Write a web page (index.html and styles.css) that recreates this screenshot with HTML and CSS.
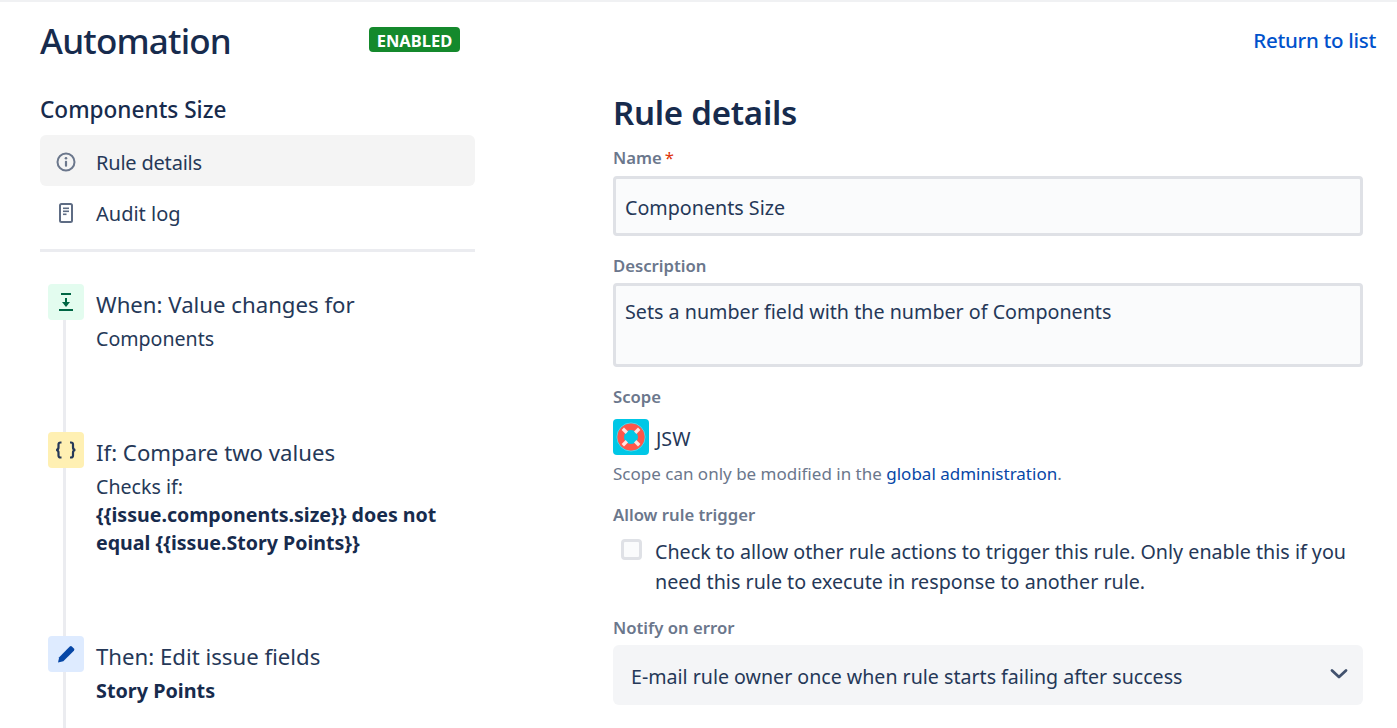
FILE: index.html
```html
<!DOCTYPE html>
<html lang="en">
<head>
<meta charset="utf-8">
<title>Automation</title>
<link rel="stylesheet" href="styles.css">
</head>
<body>
<div class="page">
  <header class="page-head">
    <div class="head-left">
      <h1 class="page-title">Automation</h1>
      <span class="lozenge"><span class="lozenge-text">ENABLED</span></span>
    </div>
    <a class="return-link" href="#">Return to list</a>
  </header>
  <div class="columns">
    <aside class="sidebar">
      <h2 class="rule-name">Components Size</h2>
      <nav class="nav">
        <a class="nav-item active" href="#">
          <span class="nav-icon">
            <svg width="24" height="24" viewBox="0 0 24 24"><circle cx="12" cy="12" r="8.500" fill="none" stroke="#6b778c" stroke-width="2"/><circle cx="12" cy="8.300" r="1.300" fill="#6b778c"/><rect x="10.900" y="10.800" width="2.200" height="6" rx="1" fill="#6b778c"/></svg>
          </span>
          <span class="nav-label">Rule details</span>
        </a>
        <a class="nav-item" href="#">
          <span class="nav-icon">
            <svg width="24" height="24" viewBox="0 0 24 24"><rect x="6" y="3" width="12" height="18" rx="1.500" fill="none" stroke="#5e6c84" stroke-width="2"/><rect x="9" y="6.500" width="6" height="1.600" fill="#5e6c84"/><rect x="9" y="9.500" width="6" height="1.600" fill="#5e6c84"/><rect x="9" y="12.500" width="3.500" height="1.600" fill="#5e6c84"/></svg>
          </span>
          <span class="nav-label audit">Audit log</span>
        </a>
      </nav>
      <div class="divider"></div>
      <ol class="steps">
        <li class="step step-when">
          <div class="step-rail">
            <span class="step-icon icon-green">
              <svg width="24" height="24" viewBox="0 0 24 24"><rect x="7" y="3" width="10" height="2" fill="#006644"/><rect x="5" y="19" width="14" height="2" fill="#006644"/><rect x="11" y="8" width="2" height="5" fill="#006644"/><path d="M8 12h8l-4 5z" fill="#006644"/></svg>
            </span>
            <span class="step-line"></span>
          </div>
          <div class="step-body">
            <div class="step-title">When: Value changes for</div>
            <div class="step-text">Components</div>
          </div>
        </li>
        <li class="step step-if">
          <div class="step-rail">
            <span class="step-icon icon-yellow">
              <svg width="36" height="36" viewBox="0 0 36 36"><path d="M13.500 10.500h-1a2 2 0 0 0-2 2v2.800a2.600 2.600 0 0 1-2.300 2.700 2.600 2.600 0 0 1 2.300 2.700v2.800a2 2 0 0 0 2 2h1M22 10.500h1a2 2 0 0 1 2 2v2.800a2.600 2.600 0 0 0 2.300 2.700 2.600 2.600 0 0 0-2.300 2.700v2.800a2 2 0 0 1-2 2h-1" fill="none" stroke="#253858" stroke-width="2.200"/></svg>
            </span>
            <span class="step-line"></span>
          </div>
          <div class="step-body">
            <div class="step-title">If: Compare two values</div>
            <div class="step-text">Checks if:</div>
            <div class="step-text strong">{{issue.components.size}} does not<br>equal {{issue.Story Points}}</div>
          </div>
        </li>
        <li class="step step-then">
          <div class="step-rail">
            <span class="step-icon icon-blue">
              <svg width="24" height="24" viewBox="0 0 24 24"><path d="M4 20.500l1.200-5.300L15.800 4.600a1.500 1.500 0 0 1 2.100 0l2 2a1.500 1.500 0 0 1 0 2.100L9.300 19.300z" fill="#0747a6"/></svg>
            </span>
            <span class="step-line"></span>
          </div>
          <div class="step-body">
            <div class="step-title">Then: Edit issue fields</div>
            <div class="step-text strong">Story Points</div>
          </div>
        </li>
      </ol>
    </aside>
    <main class="details">
      <h2 class="details-title">Rule details</h2>
      <div class="label label-name">Name<span class="req">*</span></div>
      <div class="field field-name">Components Size</div>
      <div class="label label-desc">Description</div>
      <div class="field field-desc">Sets a number field with the number of Components</div>
      <div class="label label-scope">Scope</div>
      <div class="scope-row">
        <svg class="scope-icon" width="36" height="36" viewBox="0 0 36 36">
          <rect width="36" height="36" rx="4" fill="#00c7e6"/>
          <circle cx="18" cy="18" r="14" fill="none" stroke="#fff" stroke-width=".6" opacity=".6"/>
          <circle cx="18" cy="18" r="10.300" fill="none" stroke="#ff5649" stroke-width="6.600"/>
          <g stroke="#ffe4e0" stroke-width="3.400">
            <path d="M9.800 9.800l4 4"/><path d="M26.200 9.800l-4 4"/><path d="M9.800 26.200l4-4"/><path d="M26.200 26.200l-4-4"/>
          </g>
        </svg>
        <span class="scope-name">JSW</span>
      </div>
      <div class="help">Scope can only be modified in the <a href="#">global administration</a>.</div>
      <div class="label label-allow">Allow rule trigger</div>
      <label class="check-row">
        <span class="checkbox"></span>
        <span class="check-text">Check to allow other rule actions to trigger this rule. Only enable this if you need this rule to execute in response to another rule.</span>
      </label>
      <div class="label label-notify">Notify on error</div>
      <div class="select">
        <span class="select-value">E-mail rule owner once when rule starts failing after success</span>
        <svg class="select-chevron" width="24" height="24" viewBox="0 0 24 24"><path d="M5 8.500l7 6.500 7-6.500" fill="none" stroke="#42526e" stroke-width="2.800" stroke-linecap="round" stroke-linejoin="round"/></svg>
      </div>
    </main>
  </div>
</div>
</body>
</html>
```

FILE: styles.css
```css
* { box-sizing: border-box; }
html, body { margin: 0; padding: 0; height: 100%; overflow: hidden; background: #fff; }
body {
  font-family: "Noto Sans", "Open Sans", "Liberation Sans", sans-serif;
  color: #172b4d;
  font-size: 20px;
}
a { text-decoration: none; }
h1, h2, ol { margin: 0; padding: 0; }
.page { height: 728px; overflow: hidden; border-top: 2px solid #f0f1f3; padding: 0 21px 0 40px; }
.page-head { display: flex; justify-content: space-between; align-items: center; height: 78px; }
.head-left { display: flex; width: 420px; justify-content: space-between; align-items: center; height: 78px; padding-bottom: 1px; }
.page-title { font-size: 35px; font-weight: 500; line-height: 48px; letter-spacing: -0.8px; margin-top: 1px; margin-bottom: 1px; }
.lozenge { display: flex; align-items: center; justify-content: center; background: #14892c; color: #fff; font-size: 16.5px; font-weight: 700; border-radius: 4px; height: 25px; width: 91px; margin-bottom: 2px; }
.lozenge-text { padding-top: 1px; }
.return-link { color: #0052cc; font-size: 20.5px; font-weight: 500; margin-bottom: 2px; letter-spacing: -0.3px; }
.columns { display: grid; grid-template-columns: 435px 750px; column-gap: 138px; margin-top: -1px; }
.rule-name { font-size: 22.6px; font-weight: 500; line-height: 30px; margin-top: 16px; margin-bottom: 10px; }
.nav { display: flex; flex-direction: column; }
.nav-item { display: flex; align-items: center; height: 51px; padding-top: 2px; border-radius: 6px; color: #253858; font-size: 20px; letter-spacing: -0.2px; }
.nav-item.active { background: #f4f4f4; }
.nav-icon { width: 56px; padding-left: 14px; display: flex; align-items: center; }
.nav-label { padding-top: 2px; }
.nav-label.audit { letter-spacing: 0; }
.divider { height: 3px; background: #ebecf0; margin-top: 12px; }
.steps { list-style: none; margin-top: 32px; }
.step { display: flex; padding-left: 8px; }
.step-when { height: 148px; }
.step-if { height: 204px; }
.step-then { height: 92px; }
.step-rail { width: 48px; display: flex; flex-direction: column; }
.step-icon { width: 36px; height: 36px; border-radius: 4px; display: flex; align-items: center; justify-content: center; flex: none; }
.icon-green { background: #e3fcef; }
.icon-yellow { background: #fff0b3; }
.icon-blue { background: #deebff; }
.step-line { width: 3px; flex: 1; background: #ebecf0; margin-left: 15px; }
.step-body { padding-top: 4px; }
.step-title { font-size: 22.2px; line-height: 34px; color: #253858; }
.step-text { font-size: 19.6px; line-height: 28px; color: #253858; margin-top: 3px; }
.step-text.strong { font-weight: 700; color: #172b4d; margin-top: 0; }
.step-then .step-text.strong { margin-top: 3px; font-size: 19.8px; }
.details-title { font-size: 33px; font-weight: 600; line-height: 44px; margin-top: 12px; letter-spacing: -0.25px; }
.label { font-size: 16.7px; font-weight: 600; color: #6b778c; line-height: 22px; }
.req { color: #de350b; margin-left: 3px; font-weight: 400; }
.label-name { margin-top: 12px; margin-bottom: 7px; }
.field { border: 3px solid #dfe1e6; border-radius: 4px; background: #fafbfc; padding: 0 9px; font-size: 19.7px; color: #253858; }
.field-name { height: 60px; line-height: 57px; }
.label-desc { margin-top: 19px; margin-bottom: 6px; }
.field-desc { height: 84px; line-height: 52px; }
.label-scope { margin-top: 19px; }
.scope-row { display: flex; align-items: center; gap: 7px; margin-top: 11px; height: 36px; }
.scope-icon { display: block; flex: none; }
.scope-name { font-size: 19.7px; color: #253858; padding-top: 2px; }
.help { font-size: 17px; line-height: 24px; color: #6b778c; margin-top: 7px; }
.help a { color: #0747a6; }
.label-allow { margin-top: 18px; }
.check-row { display: flex; margin-top: 11px; }
.checkbox { flex: none; width: 21px; height: 21px; border: 3px solid #dfe1e6; border-radius: 4px; background: #fafbfc; margin: 2px 13px 0 8px; }
.check-text { font-size: 19.7px; line-height: 30px; color: #253858; }
.label-notify { margin-top: 20px; margin-bottom: 6px; }
.select { height: 60px; border-radius: 6px; background: #f4f5f7; display: flex; align-items: center; justify-content: space-between; padding: 0 12px 0 18px; font-size: 19.6px; color: #253858; }
.select-value { padding-top: 3px; }
.select-chevron { margin-bottom: 2px; }
```
